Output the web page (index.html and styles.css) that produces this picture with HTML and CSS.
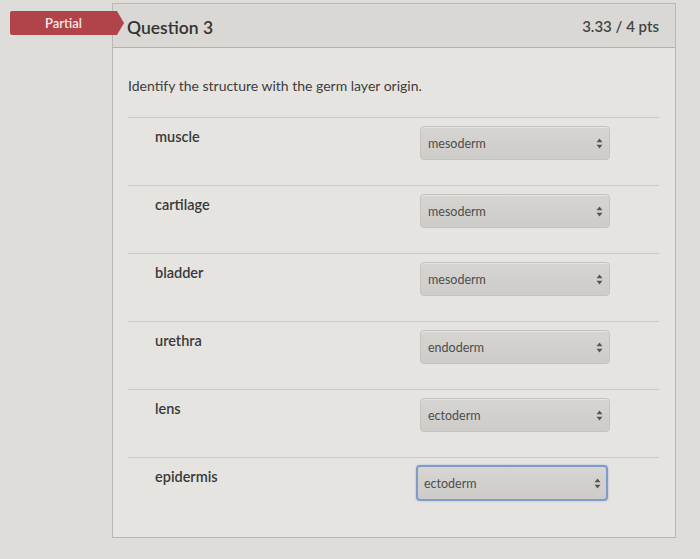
FILE: index.html
```html
<!DOCTYPE html>
<html>
<head>
<meta charset="utf-8">
<link rel="stylesheet" href="styles.css">
</head>
<body>
<div class="page">
  <div class="gutter">
    <div class="badge">Partial</div>
  </div>
  <div class="card">
    <div class="card-head">
      <div class="q-title">Question 3</div>
      <div class="q-pts">3.33 / 4 pts</div>
    </div>
    <div class="card-body">
      <p class="q-text">Identify the structure with the germ layer origin.</p>
      <div class="rows">
        <div class="row">
          <div class="label">muscle</div>
          <div class="sel"><span>mesoderm</span><svg class="arr" width="7" height="11" viewBox="0 0 7 11"><path d="M3.5 0.5 L6.5 4.3 H0.5 Z M3.5 10.5 L6.5 6.7 H0.5 Z" fill="#555"/></svg></div>
        </div>
        <div class="row">
          <div class="label">cartilage</div>
          <div class="sel"><span>mesoderm</span><svg class="arr" width="7" height="11" viewBox="0 0 7 11"><path d="M3.5 0.5 L6.5 4.3 H0.5 Z M3.5 10.5 L6.5 6.7 H0.5 Z" fill="#555"/></svg></div>
        </div>
        <div class="row">
          <div class="label">bladder</div>
          <div class="sel"><span>mesoderm</span><svg class="arr" width="7" height="11" viewBox="0 0 7 11"><path d="M3.5 0.5 L6.5 4.3 H0.5 Z M3.5 10.5 L6.5 6.7 H0.5 Z" fill="#555"/></svg></div>
        </div>
        <div class="row">
          <div class="label">urethra</div>
          <div class="sel"><span>endoderm</span><svg class="arr" width="7" height="11" viewBox="0 0 7 11"><path d="M3.5 0.5 L6.5 4.3 H0.5 Z M3.5 10.5 L6.5 6.7 H0.5 Z" fill="#555"/></svg></div>
        </div>
        <div class="row">
          <div class="label">lens</div>
          <div class="sel"><span>ectoderm</span><svg class="arr" width="7" height="11" viewBox="0 0 7 11"><path d="M3.5 0.5 L6.5 4.3 H0.5 Z M3.5 10.5 L6.5 6.7 H0.5 Z" fill="#555"/></svg></div>
        </div>
        <div class="row last">
          <div class="label">epidermis</div>
          <div class="sel focus"><span>ectoderm</span><svg class="arr" width="7" height="11" viewBox="0 0 7 11"><path d="M3.5 0.5 L6.5 4.3 H0.5 Z M3.5 10.5 L6.5 6.7 H0.5 Z" fill="#555"/></svg></div>
        </div>
      </div>
    </div>
  </div>
</div>
</body>
</html>
```
FILE: styles.css
```css
html, body {
  margin: 0;
  padding: 0;
}
body {
  width: 700px;
  height: 559px;
  overflow: hidden;
  background: #dedddA;
  font-family: Lato, "Open Sans", sans-serif;
  color: #3b3b3b;
}
.page {
  display: flex;
  padding-top: 3px;
}
.gutter {
  width: 112px;
  flex: none;
  position: relative;
}
.badge {
  position: absolute;
  left: 10px;
  top: 8px;
  width: 107px;
  height: 24px;
  background: #b1444a;
  color: #f2eaea;
  font-size: 13px;
  font-weight: 600;
  line-height: 24px;
  text-indent: 35px;
  border-radius: 2px 0 0 2px;
  z-index: 2;
}
.badge::after {
  content: "";
  position: absolute;
  right: -7px;
  top: 0;
  border-top: 12px solid transparent;
  border-bottom: 12px solid transparent;
  border-left: 7px solid #b1444a;
}
.card {
  width: 564px;
  height: 535px;
  box-sizing: border-box;
  border: 1px solid #b9b8b4;
  background: #e5e4e0;
}
.card-head {
  height: 43px;
  background: #d9d8d4;
  border-bottom: 1px solid #b3b2ae;
  display: flex;
  align-items: center;
  justify-content: space-between;
  padding: 0 16px 0 14px;
}
.q-title {
  font-size: 17.5px;
  font-weight: 600;
  color: #333;
  margin-top: 3px;
}
.q-pts {
  font-size: 15px;
  font-weight: 600;
  color: #444;
}
.card-body {
  padding: 0 16px 0 15px;
}
.q-text {
  margin: 28px 0 0 0;
  font-size: 14px;
  line-height: 19px;
  color: #3d3d3d;
}
.rows {
  margin-top: 22px;
}
.row {
  height: 67px;
  border-top: 1px solid #cbcac6;
  display: grid;
  grid-template-columns: 292px 190px;
  align-items: start;
}
.row.last {
  height: 82px;
}
.label {
  padding-left: 27px;
  padding-top: 10px;
  font-size: 14.5px;
  font-weight: 600;
  color: #3a3a3a;
  line-height: 18px;
}
.sel {
  margin-top: 8px;
  height: 34px;
  box-sizing: border-box;
  border: 1px solid #c3c2be;
  border-radius: 4px;
  background: linear-gradient(#d6d5d1, #cdccc8);
  box-shadow: inset 0 1px 1px rgba(255,255,255,0.4);
  display: flex;
  align-items: center;
  justify-content: space-between;
  padding: 0 6px 0 7px;
  font-size: 12.5px;
  color: #4d4d4d;
}
.sel span {
  margin-top: 1px;
}
.sel.focus {
  border: 2px solid #7f9cc9;
  box-shadow: 0 0 2px rgba(110,140,200,0.6);
  padding: 0 5px 0 6px;
  margin-top: 7px;
  height: 36px;
  width: 192px;
  margin-left: -4px;
}
```
